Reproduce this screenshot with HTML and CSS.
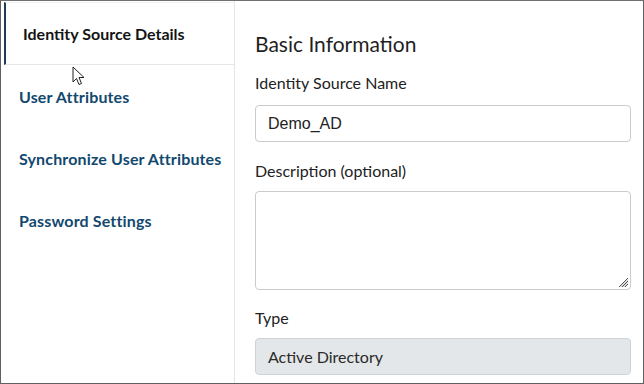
FILE: index.html
```html
<!DOCTYPE html>
<html>
<head>
<meta charset="utf-8">
<link rel="stylesheet" href="styles.css">
</head>
<body>
<div class="frame">
  <nav class="sidebar">
    <div class="nav-item active">Identity Source Details</div>
    <div class="nav-item">User Attributes</div>
    <div class="nav-item">Synchronize User Attributes</div>
    <div class="nav-item">Password Settings</div>
  </nav>
  <main class="main">
    <h2 class="section-title">Basic Information</h2>
    <label class="field-label first">Identity Source Name</label>
    <input class="text-input" type="text" value="Demo_AD">
    <label class="field-label">Description (optional)</label>
    <div class="area-wrap">
      <textarea class="text-area"></textarea>
      <svg class="grip" width="12" height="12" viewBox="0 0 12 12">
        <path d="M11 2 L2 11 M11 5 L5 11 M11 8 L8 11" stroke="#555" stroke-width="1"/>
        <path d="M11 3.5 L3.5 11 M11 6.5 L6.5 11" stroke="#aaa" stroke-width="0.8"/>
      </svg>
    </div>
    <label class="field-label">Type</label>
    <div class="select-box">Active Directory</div>
  </main>
  <svg class="cursor" width="14" height="21" viewBox="0 0 14 21">
    <path d="M1 1 L1 16 L4.5 12.5 L7 18.5 L9.5 17.5 L7 11.5 L12 11.5 Z" fill="#fff" stroke="#222" stroke-width="1" stroke-linejoin="round"/>
  </svg>
</div>
</body>
</html>
```
FILE: styles.css
```css
html, body {
  margin: 0;
  padding: 0;
  background: #fff;
}
.frame {
  width: 644px;
  height: 384px;
  box-sizing: border-box;
  border: 1px solid #606060;
  border-top-color: #707070;
  display: flex;
  overflow: hidden;
  position: relative;
  font-family: Lato, "Noto Sans", sans-serif;
  background: #fff;
}
.sidebar {
  width: 234px;
  flex: none;
  box-sizing: border-box;
  border-right: 1px solid #e4e4e4;
  padding-left: 3px;
  padding-top: 1px;
}
.nav-item {
  height: 62px;
  display: flex;
  align-items: center;
  padding-left: 15px;
  font-size: 16px;
  letter-spacing: 0.15px;
  font-weight: 700;
  color: #12486e;
  box-sizing: border-box;
}
.nav-item.active {
  height: 63px;
  border-left: 2px solid #1e3a56;
  border-bottom: 1px solid #e6e6e6;
  border-top: 1px solid #f0f0f0;
  padding-left: 17px;
  color: #141414;
  letter-spacing: 0;
}
.main {
  flex: 1;
  padding: 31px 12px 0 20px;
  display: flex;
  flex-direction: column;
}
.section-title {
  margin: 0 0 17px 0;
  font-size: 21px;
  line-height: 24px;
  font-weight: 400;
  color: #1f1f1f;
}
.field-label {
  font-size: 16px;
  line-height: 20px;
  color: #222;
  margin-bottom: 10px;
}
.field-label.first {
  margin-bottom: 12px;
}
.text-input {
  height: 37px;
  box-sizing: border-box;
  border: 1px solid #c9cccf;
  border-radius: 4px;
  padding: 0 12px;
  font-family: "Liberation Sans", Arial, sans-serif;
  font-size: 16px;
  color: #222;
  margin: 0 0 19px 0;
  outline: none;
}
.area-wrap {
  position: relative;
  display: flex;
  margin: 0 0 18px 0;
}
.text-area {
  flex: 1;
  height: 99px;
  box-sizing: border-box;
  border: 1px solid #c9cccf;
  border-radius: 4px;
  margin: 0;
  resize: none;
  font-family: inherit;
}
.grip {
  position: absolute;
  right: 2px;
  bottom: 2px;
}
.select-box {
  height: 37px;
  box-sizing: border-box;
  border: 1px solid #cfd3d6;
  border-radius: 4px;
  background: #e4e7e9;
  padding: 0 12px;
  display: flex;
  align-items: center;
  font-size: 16px;
  color: #2a2a2a;
}
.cursor {
  position: absolute;
  left: 71px;
  top: 65px;
}
```
